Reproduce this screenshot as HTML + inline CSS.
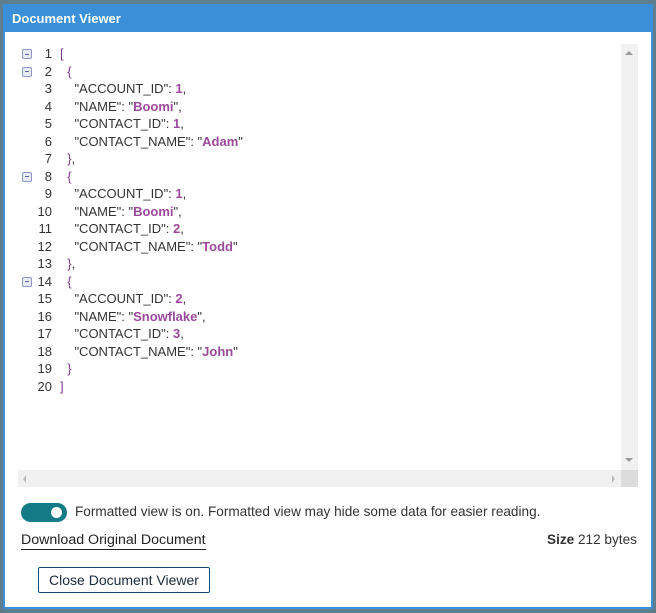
<!DOCTYPE html>
<html><head><style>
body{margin:0;width:656px;height:613px;background:#5f7f8f;position:relative;overflow:hidden;font-family:"Liberation Sans",sans-serif;}
.dlg{position:absolute;left:3px;top:4px;width:646px;height:603px;background:#fff;border:2px solid #3a8fd8;border-top:none;}
.title{height:28px;background:#3a8fd8;color:#fff;font-weight:bold;font-size:13px;line-height:29px;padding-left:7px;}
.ed{position:absolute;left:13px;top:40px;width:620px;height:443px;background:#fff;}
.vs{position:absolute;right:0;top:0;width:17px;height:426px;background:#f0f0f0;}
.hs{position:absolute;left:0;bottom:0;width:603px;height:17px;background:#f0f0f0;}
.cn{position:absolute;right:0;bottom:0;width:17px;height:17px;background:#dcdcdc;}
.ln{position:absolute;left:0;height:17.5px;line-height:17.5px;font-size:13px;color:#333;white-space:pre;}
.num{position:absolute;width:20px;text-align:right;left:14px;color:#333;}
.code{position:absolute;left:42px;}
.v{color:#9b4a9b;font-weight:bold;}
.p{color:#7a3d8a;}
.f{position:absolute;left:4px;top:4px;width:8px;height:8px;border:1px solid #8e96c4;border-radius:2px;background:#e8eaf6;}
.f:after{content:"";position:absolute;left:2px;top:3.5px;width:4px;height:1px;background:#5a62a0;}
.tog{position:absolute;left:21px;top:503px;width:46px;height:19px;border-radius:10px;background:#147a85;}
.tog:after{content:"";position:absolute;right:5px;top:4px;width:11px;height:11px;border-radius:50%;background:#fff;}
.txt{position:absolute;font-size:13.6px;color:#333;}
.btn{position:absolute;width:170px;height:24px;border:1px solid #1a4a6a;border-radius:2px;font-size:14px;color:#1a2a3a;text-align:center;line-height:24px;}
</style></head><body>
<div class="dlg">
<div class="title">Document Viewer</div>
<div class="ed">
<div class="ln" style="top:1px"><span class="f"></span><span class="num">1</span><span class="code p">[</span></div>
<div class="ln" style="top:18.5px"><span class="f"></span><span class="num">2</span><span class="code">  <span class="p">{</span></span></div>
<div class="ln" style="top:36px"><span class="num">3</span><span class="code">    "ACCOUNT_ID": <span class="v">1</span>,</span></div>
<div class="ln" style="top:53.5px"><span class="num">4</span><span class="code">    "NAME": "<span class="v">Boomi</span>",</span></div>
<div class="ln" style="top:71px"><span class="num">5</span><span class="code">    "CONTACT_ID": <span class="v">1</span>,</span></div>
<div class="ln" style="top:88.5px"><span class="num">6</span><span class="code">    "CONTACT_NAME": "<span class="v">Adam</span>"</span></div>
<div class="ln" style="top:106px"><span class="num">7</span><span class="code">  <span class="p">}</span>,</span></div>
<div class="ln" style="top:123.5px"><span class="f"></span><span class="num">8</span><span class="code">  <span class="p">{</span></span></div>
<div class="ln" style="top:141px"><span class="num">9</span><span class="code">    "ACCOUNT_ID": <span class="v">1</span>,</span></div>
<div class="ln" style="top:158.5px"><span class="num">10</span><span class="code">    "NAME": "<span class="v">Boomi</span>",</span></div>
<div class="ln" style="top:176px"><span class="num">11</span><span class="code">    "CONTACT_ID": <span class="v">2</span>,</span></div>
<div class="ln" style="top:193.5px"><span class="num">12</span><span class="code">    "CONTACT_NAME": "<span class="v">Todd</span>"</span></div>
<div class="ln" style="top:211px"><span class="num">13</span><span class="code">  <span class="p">}</span>,</span></div>
<div class="ln" style="top:228.5px"><span class="f"></span><span class="num">14</span><span class="code">  <span class="p">{</span></span></div>
<div class="ln" style="top:246px"><span class="num">15</span><span class="code">    "ACCOUNT_ID": <span class="v">2</span>,</span></div>
<div class="ln" style="top:263.5px"><span class="num">16</span><span class="code">    "NAME": "<span class="v">Snowflake</span>",</span></div>
<div class="ln" style="top:281px"><span class="num">17</span><span class="code">    "CONTACT_ID": <span class="v">3</span>,</span></div>
<div class="ln" style="top:298.5px"><span class="num">18</span><span class="code">    "CONTACT_NAME": "<span class="v">John</span>"</span></div>
<div class="ln" style="top:316px"><span class="num">19</span><span class="code">  <span class="p">}</span></span></div>
<div class="ln" style="top:333.5px"><span class="num">20</span><span class="code p">]</span></div>
<div class="vs"><div style="position:absolute;left:4px;top:7px;border:4px solid transparent;border-bottom:4px solid #999;border-top:0"></div><div style="position:absolute;left:4px;bottom:8px;border:4px solid transparent;border-top:4px solid #999;border-bottom:0"></div></div>
<div class="hs"><div style="position:absolute;left:5px;top:5px;border:4px solid transparent;border-right:3px solid #bbb;border-left:0"></div><div style="position:absolute;right:6px;top:5px;border:4px solid transparent;border-left:3px solid #bbb;border-right:0"></div></div>
<div class="cn"></div>
</div>
</div>
<div class="tog"></div>
<div class="txt" style="left:75px;top:504px">Formatted view is on. Formatted view may hide some data for easier reading.</div>
<div class="txt" style="left:21px;top:532px;font-size:14.2px;color:#222;border-bottom:1.5px solid #222;padding-bottom:1px">Download Original Document</div>
<div class="txt" style="left:547px;top:532px"><b>Size</b> 212 bytes</div>
<div class="btn" style="left:38px;top:567px">Close Document Viewer</div>
</body></html>
